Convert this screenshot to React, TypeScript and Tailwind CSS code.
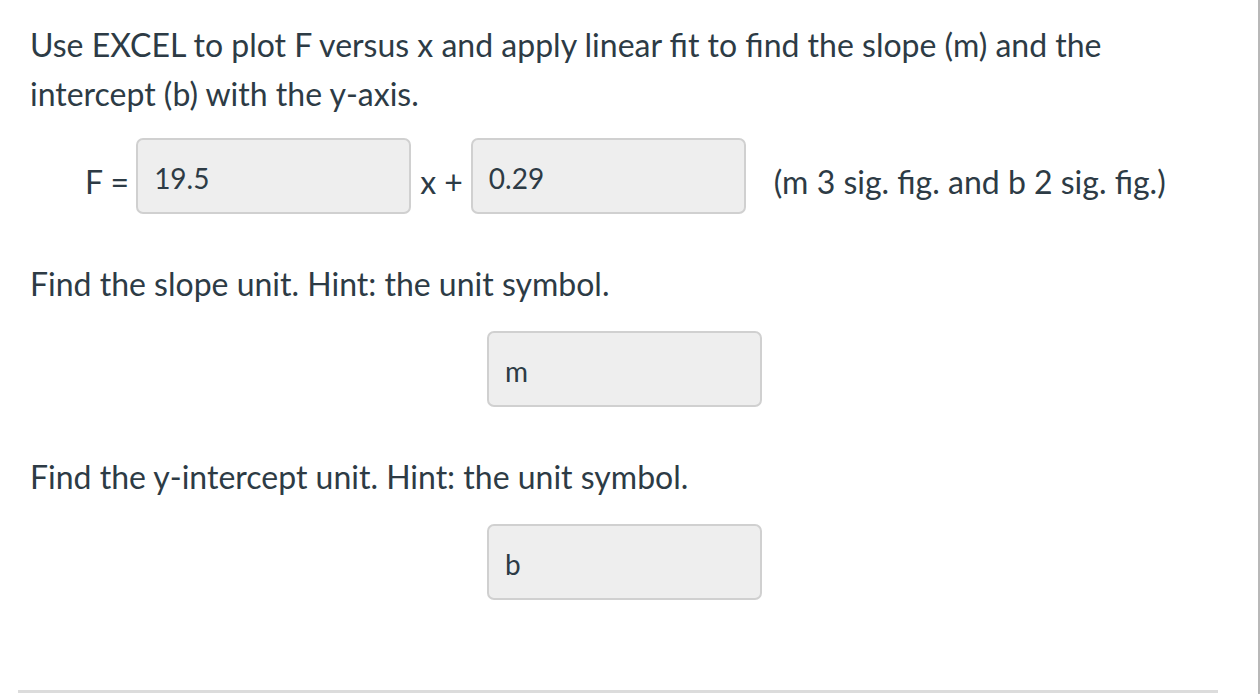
import React from 'react';

function AnswerBox({ value, className = '' }: { value: string; className?: string }) {
  return (
    <div
      className={`w-[275px] h-[76px] shrink-0 rounded-[7px] border-2 border-[#d0d0d0] bg-[#eeeeee] pl-[16px] pt-[24px] text-[28px] leading-[28px] text-[#2d3b45] ${className}`}
    >
      {value}
    </div>
  );
}

export default function App() {
  return (
    <div className="h-[694px] w-[1260px] overflow-hidden bg-white font-['Lato','Liberation_Sans',sans-serif] text-[#2d3b45]">
      <div className="flex h-full border-r-2 border-[#b8b8b8]">
        <div className="flex w-[1220px] flex-col pl-[30px]">
          <p className="mt-[20px] text-[32px] leading-[49px]">
            Use EXCEL to plot F versus x and apply linear fit to find the slope (m) and the intercept (b) with the
            y-axis.
          </p>

          {/* equation row */}
          <div className="mt-[20px] flex items-start">
            <span className="ml-[55px] mr-[7px] pt-[28px] text-[32px] leading-[32px]">F =</span>
            <AnswerBox value="19.5" />
            <span className="ml-[9px] mr-[8px] pt-[28px] text-[32px] leading-[32px]">x +</span>
            <AnswerBox value="0.29" />
            <span className="ml-[28px] pt-[28px] text-[32px] leading-[32px]">(m 3 sig. fig. and b 2 sig. fig.)</span>
          </div>

          <p className="mt-[50px] text-[32px] leading-[40px]">Find the slope unit. Hint: the unit symbol.</p>
          <AnswerBox value="m" className="ml-[457px] mt-[27px]" />

          <p className="mt-[50px] text-[32px] leading-[40px]">Find the y-intercept unit. Hint: the unit symbol.</p>
          <AnswerBox value="b" className="ml-[457px] mt-[27px]" />

          <div className="ml-[-12px] mt-auto mb-[1px] h-[3px] w-[1200px] bg-[#dcdcdc]" />
        </div>
      </div>
    </div>
  );
}
